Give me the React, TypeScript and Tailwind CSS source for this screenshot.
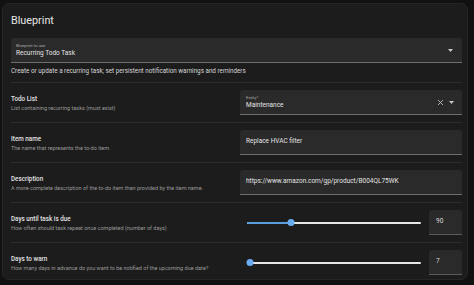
import React from 'react';

type RowProps = {
  title: string;
  subtitle: string;
  children: React.ReactNode;
};

const Row: React.FC<RowProps> = ({ title, subtitle, children }) => (
  <div className="flex items-center h-[40px] border-t border-[#2c2c2c]">
    <div className="flex-1 min-w-0 pt-[3px]">
      <div className="text-[6.3px] leading-[9px] text-[#e3e3e3] font-medium">{title}</div>
      <div className="text-[5.5px] leading-[9px] text-[#9a9a9a]">{subtitle}</div>
    </div>
    <div className="w-[222px] shrink-0">{children}</div>
  </div>
);

const TextField: React.FC<{ value: string }> = ({ value }) => (
  <div className="h-[25px] bg-[#2a2a2a] rounded-t-[3px] border-b border-[#6e6e6e] flex items-center px-[6px]">
    <span className="text-[6.5px] text-[#e3e3e3]">{value}</span>
  </div>
);

const Caret: React.FC = () => (
  <svg width="5" height="3" viewBox="0 0 5 3" className="shrink-0">
    <path d="M0 0 L5 0 L2.5 3 Z" fill="#c8c8c8" />
  </svg>
);

const SliderField: React.FC<{ value: number; pct: number }> = ({ value, pct }) => (
  <div className="flex items-center h-[25px]">
    <div className="w-[174px] ml-[7px] relative h-[8px] flex items-center">
      <div className="h-[2px] w-full bg-[#e6e6e6] rounded-full" />
      <div className="absolute left-0 h-[2px] bg-[#5c9fe0] rounded-full" style={{ width: `${pct}%` }} />
      <div
        className="absolute w-[7px] h-[7px] rounded-full bg-[#6aacf2] -translate-x-1/2"
        style={{ left: `${pct}%` }}
      />
    </div>
    <div className="ml-auto w-[33px] h-[25px] bg-[#2a2a2a] rounded-t-[3px] border-b border-[#5a5a5a] flex items-center px-[7px]">
      <span className="text-[6.5px] text-[#d8d8d8]">{value}</span>
    </div>
  </div>
);

export default function App() {
  return (
    <div
      className="w-[474px] h-[285px] bg-[#111111] pt-[3px] pl-[2px]"
      style={{ fontFamily: 'Roboto, "Liberation Sans", sans-serif' }}
    >
      <div className="w-[466px] h-[277px] bg-[#1c1c1c] border border-[#262626] rounded-[7px] pl-[8px] pr-[5px]">
        <div className="pt-[10px] text-[10.8px] leading-[14px] text-[#e6e6e6]">Blueprint</div>
        <div className="mt-[10px] h-[25px] bg-[#2a2a2a] rounded-t-[3px] border-b border-[#6e6e6e] flex items-center pl-[5px] pr-[9px]">
          <div className="flex-1">
            <div className="text-[4.2px] leading-[6px] text-[#a8a8a8]">Blueprint to use</div>
            <div className="text-[6.5px] leading-[9px] text-[#e3e3e3]">Recurring Todo Task</div>
          </div>
          <Caret />
        </div>
        <div className="mt-[4px] mb-[6px] text-[6.3px] leading-[9px] text-[#d6d6d6]">
          Create or update a recurring task; set persistent notification warnings and reminders
        </div>
        <Row title="Todo List" subtitle="List containing recurring tasks (must exist)">
          <div className="h-[25px] bg-[#2a2a2a] rounded-t-[3px] border-b border-[#6e6e6e] flex items-center pl-[6px] pr-[8px]">
            <div className="flex-1">
              <div className="text-[4.2px] leading-[6px] text-[#a8a8a8]">Entity*</div>
              <div className="text-[6.5px] leading-[9px] text-[#e3e3e3]">Maintenance</div>
            </div>
            <svg width="7" height="7" viewBox="0 0 7 7" className="mr-[5px]">
              <path d="M1 1 L6 6 M6 1 L1 6" stroke="#bdbdbd" strokeWidth="0.9" />
            </svg>
            <Caret />
          </div>
        </Row>
        <Row title="Item name" subtitle="The name that represents the to-do item.">
          <TextField value="Replace HVAC filter" />
        </Row>
        <Row title="Description" subtitle="A more complete description of the to-do item than provided by the item name.">
          <TextField value="https://www.amazon.com/gp/product/B004QL75WK" />
        </Row>
        <Row title="Days until task is due" subtitle="How often should task repeat once completed (number of days)">
          <SliderField value={90} pct={25} />
        </Row>
        <Row title="Days to warn" subtitle="How many days in advance do you want to be notified of the upcoming due date?">
          <SliderField value={7} pct={2} />
        </Row>
      </div>
    </div>
  );
}
